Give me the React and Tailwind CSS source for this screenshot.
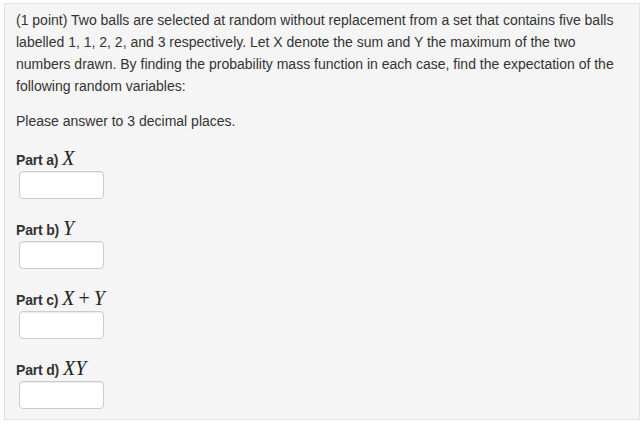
const parts = [
  { id: "a", math: <i>X</i> },
  { id: "b", math: <i>Y</i> },
  { id: "c", math: (<><i>X</i><span className="mx-[4px] not-italic">+</span><i>Y</i></>) },
  { id: "d", math: <i>XY</i> },
];

export default function App() {
  return (
    <div className="min-h-[425px] bg-white pl-[4px] pt-[3px] font-['Liberation_Sans',Arial,sans-serif] text-[#333]">
      <div className="w-[636px] h-[417px] border border-[#e3e3e3] bg-[#f5f5f5] px-[11px] pt-[5px]">
        <p className="text-[14px] leading-[22px] whitespace-nowrap">
          (1 point) Two balls are selected at random without replacement from a set that contains five balls<br />
          labelled 1, 1, 2, 2, and 3 respectively. Let X denote the sum and Y the maximum of the two<br />
          numbers drawn. By finding the probability mass function in each case, find the expectation of the<br />
          following random variables:
        </p>
        <p className="mt-[13px] text-[14px] leading-[22px]">Please answer to 3 decimal places.</p>
        <div className="mt-[16px] flex flex-col gap-[19px]">
          {parts.map((p) => (
            <div key={p.id}>
              <div className="flex items-baseline h-[20px] leading-[20px]">
                <span className="text-[14px] font-bold tracking-[-0.2px] leading-[20px]">Part {p.id})</span>
                <span className="ml-[4px] font-['Liberation_Serif','Times_New_Roman',serif] text-[20px] leading-[20px] text-[#222]">
                  {p.math}
                </span>
              </div>
              <input
                type="text"
                className="mt-[3px] ml-[3px] block w-[85px] h-[28px] rounded-[4px] border border-[#ccc] bg-white shadow-[inset_0_1px_1px_rgba(0,0,0,0.075)]"
              />
            </div>
          ))}
        </div>
      </div>
    </div>
  );
}
